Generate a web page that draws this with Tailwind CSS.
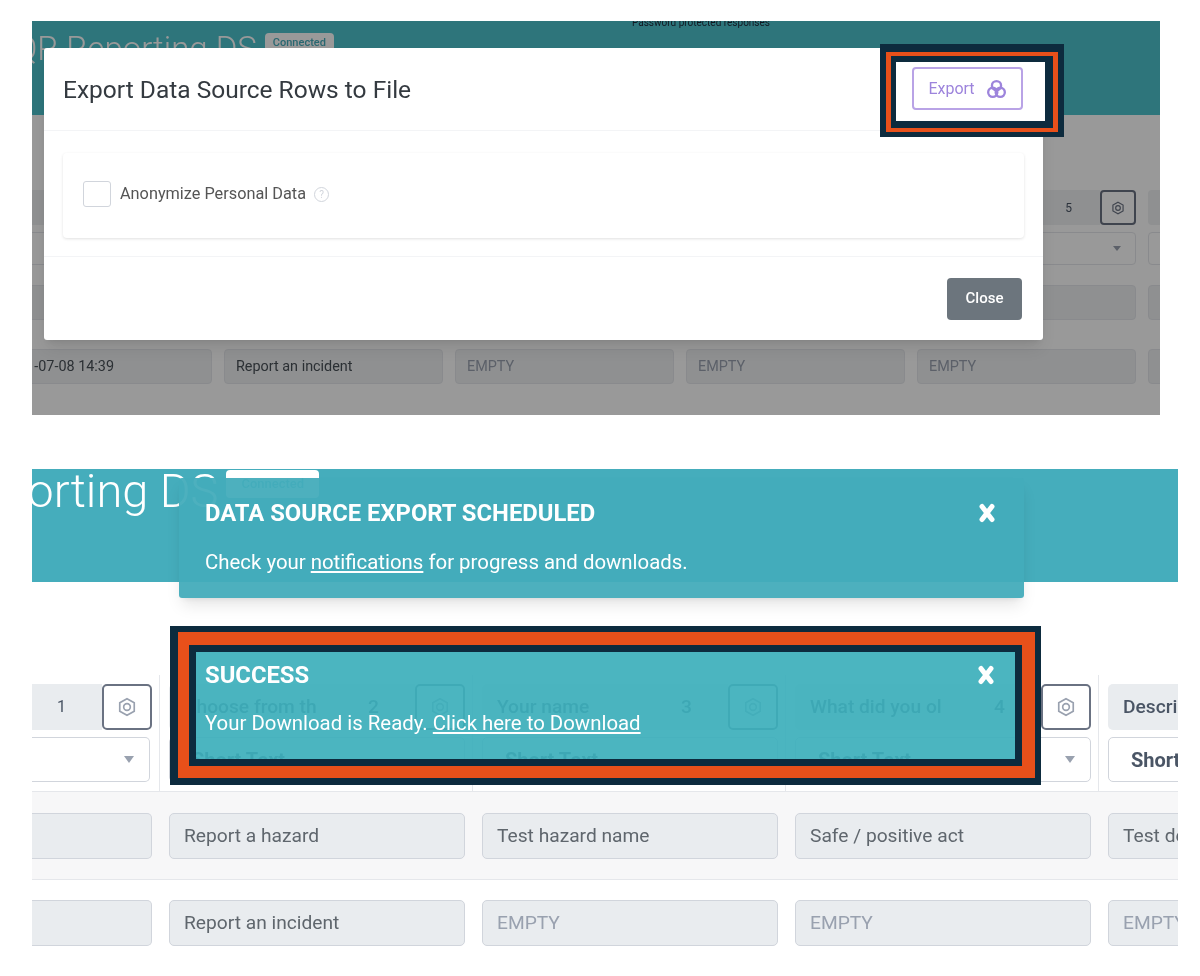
<!DOCTYPE html>
<html lang="en">

<head>
    <meta charset="UTF-8">
    <meta name="viewport" content="width=device-width, initial-scale=1.0">
    <title>Export Data Source Rows to File</title>
    <script src="https://cdn.jsdelivr.net/npm/@tailwindcss/browser@4"></script>
</head>

<body class="bg-white font-[Roboto,sans-serif]">
    <div class="w-[1200px] h-[976px] overflow-hidden pt-[21px] pl-[32px] blur-[0.6px]">

        <!-- Step 1: export modal -->
        <section class="relative w-[1128px] h-[394px] overflow-hidden bg-white">
            <div class="h-[94px] bg-[#4dc3cd] relative">
                <p class="absolute right-[390px] top-[-6px] text-[10px] text-gray-800 whitespace-nowrap">Password protected responses</p>
                <div class="flex items-start gap-[8px] pt-[8px] ml-[-17px]">
                    <h1 class="text-[33px] leading-[40px] font-light text-white whitespace-nowrap">QR Reporting DS</h1>
                    <span class="mt-[4px] bg-white text-[#45adbc] text-[11px] font-medium leading-[17px] rounded px-[8px] py-[1px]">Connected</span>
                </div>
            </div>

            <!-- Background table -->
            <div class="flex gap-[12px] ml-[-39px] pt-[75px]">
                <div class="w-[219px] shrink-0"><div class="h-[35px] bg-[#eef0f2] rounded"></div></div>
                <div class="w-[219px] shrink-0"><div class="h-[35px] bg-[#eef0f2] rounded"></div></div>
                <div class="w-[219px] shrink-0"><div class="h-[35px] bg-[#eef0f2] rounded"></div></div>
                <div class="w-[219px] shrink-0"><div class="h-[35px] bg-[#eef0f2] rounded"></div></div>
                <div class="w-[219px] shrink-0">
                    <div class="h-[35px] flex items-stretch">
                        <div class="flex-1 bg-[#eef0f2] rounded-l flex items-center justify-end pr-[28px] text-[12px] text-gray-600">5</div>
                        <div class="w-[36px] bg-white border-2 border-gray-500 rounded flex items-center justify-center">
                            <svg class="w-[14px] h-[14px] text-gray-500" viewBox="0 0 24 24" fill="none" stroke="currentColor" stroke-width="2"><path d="M12 2l8.7 5v10L12 22l-8.7-5V7z" /><circle cx="12" cy="12" r="4" /></svg>
                        </div>
                    </div>
                </div>
                <div class="w-[219px] shrink-0"><div class="h-[35px] bg-[#eef0f2] rounded"></div></div>
            </div>
            <div class="flex gap-[12px] ml-[-39px] pt-[7px]">
                <div class="w-[219px] shrink-0 h-[33px] bg-white border border-gray-200 rounded"></div>
                <div class="w-[219px] shrink-0 h-[33px] bg-white border border-gray-200 rounded"></div>
                <div class="w-[219px] shrink-0 h-[33px] bg-white border border-gray-200 rounded"></div>
                <div class="w-[219px] shrink-0 h-[33px] bg-white border border-gray-200 rounded"></div>
                <div class="w-[219px] shrink-0 h-[33px] bg-white border border-gray-200 rounded flex items-center justify-end pr-[14px]">
                    <span class="border-x-[4px] border-t-[5px] border-x-transparent border-t-gray-400"></span>
                </div>
                <div class="w-[219px] shrink-0 h-[33px] bg-white border border-gray-200 rounded"></div>
            </div>
            <div class="flex gap-[12px] ml-[-39px] pt-[20px]">
                <div class="w-[219px] shrink-0 h-[35px] bg-[#eef0f2] border border-gray-200 rounded"></div>
                <div class="w-[219px] shrink-0 h-[35px] bg-[#eef0f2] border border-gray-200 rounded"></div>
                <div class="w-[219px] shrink-0 h-[35px] bg-[#eef0f2] border border-gray-200 rounded"></div>
                <div class="w-[219px] shrink-0 h-[35px] bg-[#eef0f2] border border-gray-200 rounded"></div>
                <div class="w-[219px] shrink-0 h-[35px] bg-[#eef0f2] border border-gray-200 rounded"></div>
                <div class="w-[219px] shrink-0 h-[35px] bg-[#eef0f2] border border-gray-200 rounded"></div>
            </div>
            <div class="flex gap-[12px] ml-[-39px] pt-[29px] text-[14.4px] text-[#495057]">
                <div class="w-[219px] shrink-0 h-[35px] bg-[#eef0f2] border border-gray-200 rounded flex items-center justify-end pr-[97px] whitespace-nowrap">2021-07-08 14:39</div>
                <div class="w-[219px] shrink-0 h-[35px] bg-[#eef0f2] border border-gray-200 rounded flex items-center pl-[11px]">Report an incident</div>
                <div class="w-[219px] shrink-0 h-[35px] bg-[#eef0f2] border border-gray-200 rounded flex items-center pl-[11px] text-gray-400">EMPTY</div>
                <div class="w-[219px] shrink-0 h-[35px] bg-[#eef0f2] border border-gray-200 rounded flex items-center pl-[11px] text-gray-400">EMPTY</div>
                <div class="w-[219px] shrink-0 h-[35px] bg-[#eef0f2] border border-gray-200 rounded flex items-center pl-[11px] text-gray-400">EMPTY</div>
                <div class="w-[219px] shrink-0 h-[35px] bg-[#eef0f2] border border-gray-200 rounded"></div>
            </div>

            <div class="absolute inset-0 bg-black/40"></div>

            <!-- Modal -->
            <div class="absolute left-[12px] top-[27px] w-[999px] h-[292px] bg-white rounded-[3px] shadow-lg flex flex-col">
                <div class="h-[83px] shrink-0 border-b border-gray-100 flex items-center pl-[19px] pt-[2px]">
                    <h2 class="text-[24.5px] text-[#343a40]">Export Data Source Rows to File</h2>
                </div>
                <div class="h-[126px] shrink-0 border-b border-gray-100 px-[19px] pt-[22px]">
                    <div class="h-[85px] rounded shadow-[0_1px_3px_rgba(0,0,0,0.12)] flex items-center pl-[20px] pb-[3px]">
                        <span class="w-[28px] h-[26px] bg-white border border-gray-300 rounded-[3px]"></span>
                        <span class="ml-[9px] text-[16.3px] text-[#555]">Anonymize Personal Data</span>
                        <span class="ml-[8px] w-[15px] h-[15px] rounded-full border border-gray-300 text-[10px] leading-[13px] text-center text-gray-300">?</span>
                    </div>
                </div>
                <div class="flex-1 flex items-center justify-end pr-[21px]">
                    <button class="w-[75px] h-[42px] bg-[#6c757d] text-white text-[15px] font-medium rounded">Close</button>
                </div>
            </div>

            <!-- Highlight around Export -->
            <div class="absolute left-[848px] top-[23px] w-[184px] h-[93px] border-[#0d2b3e] border-x-[6px] border-t-[8px] border-b-[5px]">
                <div class="h-full border-[#e8501a] border-x-[5px] border-y-[4px]">
                    <div class="h-full border-[#0d2b3e] border-l-[5px] border-r-[8px] border-t-[6px] border-b-[7px] bg-white pl-[16px] pt-[5px]">
                        <button class="w-[111px] h-[43px] border-2 border-[#b9a3e6] rounded bg-white text-[#9d84dc] text-[16px] flex items-center justify-center gap-[11px]">
                            Export
                            <svg class="w-[21px] h-[20px]" viewBox="0 0 24 24" fill="none" stroke="currentColor" stroke-width="2.8"><circle cx="12" cy="8" r="5.5" /><circle cx="7.5" cy="16" r="5.5" /><circle cx="16.5" cy="16" r="5.5" /></svg>
                        </button>
                    </div>
                </div>
            </div>
        </section>

        <!-- Step 2: notifications -->
        <section class="relative w-[1146px] h-[507px] mt-[54px] overflow-hidden bg-white">
            <div class="h-[113px] bg-[#45adbc] overflow-hidden">
                <div class="flex items-start gap-[8px] ml-[-158px]">
                    <h1 class="text-[47px] leading-[44px] font-light text-white whitespace-nowrap">QR Reporting DS</h1>
                    <span class="bg-white text-[#45adbc] text-[13px] font-medium rounded px-[15px] py-[4px] mt-[1px]">Connected</span>
                </div>
            </div>

            <!-- Table head -->
            <div class="flex gap-[9px] mt-[93px] h-[117px] border-b border-gray-200">
                <div class="w-[128px] shrink-0 pr-[7px] border-r border-gray-200 pt-[9px]">
                    <div class="flex h-[46px]">
                        <div class="flex-1 bg-[#e9ecef] flex items-center justify-end pr-[36px] text-[16px] text-gray-600">1</div>
                        <div class="w-[50px] bg-white border-2 border-gray-500 rounded-[5px] flex items-center justify-center">
                            <svg class="w-[20px] h-[20px] text-gray-400" viewBox="0 0 24 24" fill="none" stroke="currentColor" stroke-width="2"><path d="M12 2l8.7 5v10L12 22l-8.7-5V7z" /><circle cx="12" cy="12" r="4" /></svg>
                        </div>
                    </div>
                    <div class="h-[45px] mt-[7px] mr-[2px] border border-gray-300 rounded-[5px] rounded-l-none border-l-0 flex items-center justify-end pr-[15px]">
                        <span class="border-x-[5px] border-t-[7px] border-x-transparent border-t-gray-400"></span>
                    </div>
                </div>
                <div class="w-[304px] shrink-0 pr-[7px] border-r border-gray-200 pt-[9px]">
                    <div class="flex h-[46px]">
                        <div class="flex-1 bg-[#e9ecef] rounded-l-[5px] flex items-center justify-between pl-[15px] pr-[36px] text-[19.2px] text-gray-600 font-medium"><span>Choose from th</span><span>2</span></div>
                        <div class="w-[50px] bg-white border-2 border-gray-500 rounded-[5px] flex items-center justify-center">
                            <svg class="w-[20px] h-[20px] text-gray-400" viewBox="0 0 24 24" fill="none" stroke="currentColor" stroke-width="2"><path d="M12 2l8.7 5v10L12 22l-8.7-5V7z" /><circle cx="12" cy="12" r="4" /></svg>
                        </div>
                    </div>
                    <div class="h-[45px] mt-[7px] border border-gray-300 rounded-[5px] flex items-center pl-[22px] text-[20px] font-bold text-gray-600">Short Text</div>
                </div>
                <div class="w-[304px] shrink-0 pr-[7px] border-r border-gray-200 pt-[9px]">
                    <div class="flex h-[46px]">
                        <div class="flex-1 bg-[#e9ecef] rounded-l-[5px] flex items-center justify-between pl-[15px] pr-[36px] text-[19.2px] text-gray-600 font-medium"><span>Your name</span><span>3</span></div>
                        <div class="w-[50px] bg-white border-2 border-gray-500 rounded-[5px] flex items-center justify-center">
                            <svg class="w-[20px] h-[20px] text-gray-400" viewBox="0 0 24 24" fill="none" stroke="currentColor" stroke-width="2"><path d="M12 2l8.7 5v10L12 22l-8.7-5V7z" /><circle cx="12" cy="12" r="4" /></svg>
                        </div>
                    </div>
                    <div class="h-[45px] mt-[7px] border border-gray-300 rounded-[5px] flex items-center pl-[22px] text-[20px] font-bold text-gray-600">Short Text</div>
                </div>
                <div class="w-[304px] shrink-0 pr-[7px] border-r border-gray-200 pt-[9px]">
                    <div class="flex h-[46px]">
                        <div class="flex-1 bg-[#e9ecef] rounded-l-[5px] flex items-center justify-between pl-[15px] pr-[36px] text-[19.2px] text-gray-600 font-medium"><span>What did you ol</span><span>4</span></div>
                        <div class="w-[50px] bg-white border-2 border-gray-500 rounded-[5px] flex items-center justify-center">
                            <svg class="w-[20px] h-[20px] text-gray-400" viewBox="0 0 24 24" fill="none" stroke="currentColor" stroke-width="2"><path d="M12 2l8.7 5v10L12 22l-8.7-5V7z" /><circle cx="12" cy="12" r="4" /></svg>
                        </div>
                    </div>
                    <div class="h-[45px] mt-[7px] border border-gray-300 rounded-[5px] flex items-center justify-between pl-[22px] pr-[15px] text-[20px] font-bold text-gray-600"><span>Short Text</span><span class="border-x-[5px] border-t-[7px] border-x-transparent border-t-gray-400"></span></div>
                </div>
                <div class="w-[296px] shrink-0 pt-[9px]">
                    <div class="h-[46px] bg-[#e9ecef] rounded-[5px] flex items-center pl-[15px] text-[19.2px] text-gray-600 font-medium">Description</div>
                    <div class="h-[45px] mt-[7px] bg-white border border-gray-300 rounded-[5px] flex items-center pl-[22px] text-[20px] font-bold text-gray-600">Short Text</div>
                </div>
            </div>

            <!-- Rows -->
            <div class="flex gap-[17px] h-[88px] pt-[21px] bg-[#f7f7f8] border-b border-gray-200 text-[19.2px] text-[#5f666d]">
                <div class="w-[120px] shrink-0 h-[46px] bg-[#e9ecef] border border-l-0 border-gray-300 rounded-r-[5px]"></div>
                <div class="w-[296px] shrink-0 h-[46px] bg-[#e9ecef] border border-gray-300 rounded-[5px] flex items-center pl-[14px]">Report a hazard</div>
                <div class="w-[296px] shrink-0 h-[46px] bg-[#e9ecef] border border-gray-300 rounded-[5px] flex items-center pl-[14px]">Test hazard name</div>
                <div class="w-[296px] shrink-0 h-[46px] bg-[#e9ecef] border border-gray-300 rounded-[5px] flex items-center pl-[14px]">Safe / positive act</div>
                <div class="w-[296px] shrink-0 h-[46px] bg-[#e9ecef] border border-gray-300 rounded-[5px] flex items-center pl-[14px] whitespace-nowrap">Test description</div>
            </div>
            <div class="flex gap-[17px] pt-[20px] text-[19.2px] text-[#5f666d]">
                <div class="w-[120px] shrink-0 h-[46px] bg-[#e9ecef] border border-l-0 border-gray-300 rounded-r-[5px]"></div>
                <div class="w-[296px] shrink-0 h-[46px] bg-[#e9ecef] border border-gray-300 rounded-[5px] flex items-center pl-[14px]">Report an incident</div>
                <div class="w-[296px] shrink-0 h-[46px] bg-[#e9ecef] border border-gray-300 rounded-[5px] flex items-center pl-[14px] text-gray-400">EMPTY</div>
                <div class="w-[296px] shrink-0 h-[46px] bg-[#e9ecef] border border-gray-300 rounded-[5px] flex items-center pl-[14px] text-gray-400">EMPTY</div>
                <div class="w-[296px] shrink-0 h-[46px] bg-[#e9ecef] border border-gray-300 rounded-[5px] flex items-center pl-[14px] text-gray-400">EMPTY</div>
            </div>

            <!-- Scheduled toast -->
            <div class="absolute left-[147px] top-[9px] w-[845px] h-[120px] bg-[#43acbb]/95 rounded-[3px] shadow-lg text-white pl-[26px] pr-[29px] pt-[21px]">
                <div class="flex items-center justify-between">
                    <h3 class="text-[23.8px] leading-[28px] font-bold">DATA SOURCE EXPORT SCHEDULED</h3>
                    <svg class="w-[16px] h-[20px]" viewBox="0 0 16 20" fill="none" stroke="currentColor" stroke-width="5" stroke-linecap="round"><path d="M3 3.5l10 13M13 3.5l-10 13" /></svg>
                </div>
                <p class="mt-[22px] text-[20.4px] leading-[26px]">Check your <a class="underline">notifications</a> for progress and downloads.</p>
            </div>

            <!-- Highlighted success toast -->
            <div class="absolute left-[138px] top-[157px] w-[871px] h-[159px] border-[#0d2b3e] border-l-[8px] border-r-[6px] border-t-[6px] border-b-[7px]">
                <div class="h-full border-[#e8501a] border-l-[11px] border-r-[13px] border-t-[13px] border-b-[12px]">
                    <div class="h-full border-[#0d2b3e] border-[7px] bg-[#3cafbb]/92 text-white pl-[9px] pr-[21px] pt-[9px]">
                        <div class="flex items-center justify-between">
                            <h3 class="text-[23.8px] leading-[28px] font-bold">SUCCESS</h3>
                            <svg class="w-[16px] h-[20px]" viewBox="0 0 16 20" fill="none" stroke="currentColor" stroke-width="5" stroke-linecap="round"><path d="M3 3.5l10 13M13 3.5l-10 13" /></svg>
                        </div>
                        <p class="mt-[21px] text-[20.4px] leading-[26px]">Your Download is Ready. <a class="underline">Click here to Download</a></p>
                    </div>
                </div>
            </div>
        </section>
    </div>
</body>

</html>
